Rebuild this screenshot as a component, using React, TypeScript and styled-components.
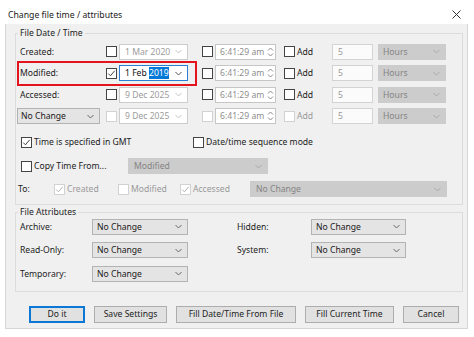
import { Fragment, type ReactNode } from 'react';
import styled, { createGlobalStyle } from 'styled-components';

const GlobalStyle = createGlobalStyle`
  html, body {
    margin: 0;
    padding: 0;
    background: #fff;
  }
  body {
    font-family: "Noto Sans", "Segoe UI", sans-serif;
    font-size: 8.6px;
    color: #222;
  }
`;

const Window = styled.div`
  width: 474px;
  height: 337px;
  background: #fff;
  overflow: hidden;
`;

const TitleBar = styled.div`
  height: 24px;
  box-sizing: border-box;
  padding: 5px 13px 0 8px;
  display: flex;
  align-items: center;
  font-size: 8.7px;
  color: #1a1a1a;
`;

const CloseIcon = styled.svg`
  margin-left: auto;
`;

const Body = styled.div`
  margin-left: 5px;
  width: 463px;
  height: 305px;
  box-sizing: border-box;
  background: #f0f0f0;
  border: 1px solid #d6d6d6;
  border-top: none;
  padding: 4px 0 0 9px;
`;

const Group = styled.fieldset<{ $padTop: number; $padBottom: number; $gapTop?: number }>`
  margin: ${({ $gapTop }) => $gapTop ?? 0}px 0 0 0;
  padding: ${({ $padTop }) => $padTop}px 0 ${({ $padBottom }) => $padBottom}px 0;
  width: 448px;
  box-sizing: border-box;
  border: 1px solid #dcdcdc;
  min-inline-size: 0;
`;

const Legend = styled.legend`
  line-height: 11px;
  height: 11px;
  padding: 0 2px;
  margin-left: 2px;
`;

const DateRow = styled.div`
  position: relative;
  display: flex;
  align-items: center;
  height: 21.5px;
`;

const RowLabel = styled.span`
  width: 88px;
  box-sizing: border-box;
  padding-left: 4px;
  flex: none;
`;

const RedFrame = styled.div`
  position: absolute;
  left: 1px;
  top: -1.5px;
  width: 180px;
  height: 25px;
  box-sizing: border-box;
  border: 2.5px solid #e3141c;
  pointer-events: none;
`;

const Box = styled.span<{ $off?: boolean; $gap?: number }>`
  display: inline-flex;
  align-items: center;
  justify-content: center;
  flex: none;
  width: 11px;
  height: 11px;
  box-sizing: border-box;
  margin-left: ${({ $gap }) => $gap ?? 0}px;
  border: 1px solid ${({ $off }) => ($off ? '#d2d2d2' : '#444')};
  background: #fff;
`;

type Tone = 'edit' | 'active' | 'list' | 'off';

const tones: Record<Tone, { bg: string; border: string; color: string; arrow: string }> = {
  edit: { bg: '#fff', border: '#cdcdcd', color: '#9c9c9c', arrow: '#c4c4c4' },
  active: { bg: '#fff', border: '#2a7fd4', color: '#111', arrow: '#555' },
  list: { bg: '#e4e4e4', border: '#b3b3b3', color: '#1a1a1a', arrow: '#666' },
  off: { bg: '#cccccc', border: '#cccccc', color: '#848484', arrow: '#a9a9a9' },
};

const ComboBox = styled.div<{ $w: number; $tone: Tone; $gap?: number; $pad?: number }>`
  width: ${({ $w }) => $w}px;
  height: 16px;
  flex: none;
  box-sizing: border-box;
  margin-left: ${({ $gap }) => $gap ?? 0}px;
  display: flex;
  align-items: center;
  padding: 0 5px 0 ${({ $pad }) => $pad ?? 4}px;
  background: ${({ $tone }) => tones[$tone].bg};
  border: 1px solid ${({ $tone }) => tones[$tone].border};
  color: ${({ $tone }) => tones[$tone].color};
  white-space: nowrap;
  overflow: hidden;
`;

const ComboText = styled.span`
  flex: 1;
`;

const Selected = styled.span`
  background: #0078d7;
  color: #fff;
`;

const TimeBox = styled.div<{ $gap: number }>`
  width: 61px;
  height: 16px;
  flex: none;
  box-sizing: border-box;
  margin-left: ${({ $gap }) => $gap}px;
  display: flex;
  align-items: center;
  padding: 0 1px 0 4px;
  background: #fff;
  border: 1px solid #c6c6c6;
  color: #8e8e8e;
  white-space: nowrap;
`;

const Spinner = styled.svg`
  margin-left: auto;
  flex: none;
`;

const AddCell = styled.span<{ $off?: boolean }>`
  width: 48px;
  flex: none;
  margin-left: 8px;
  display: flex;
  align-items: center;
  gap: 2px;
  color: ${({ $off }) => ($off ? '#9a9a9a' : '#222')};
`;

const NumField = styled.div`
  width: 41px;
  height: 16px;
  flex: none;
  box-sizing: border-box;
  padding-left: 5px;
  display: flex;
  align-items: center;
  background: #fbfbfb;
  border: 1px solid #d3d3d3;
  color: #999;
`;

const OptionRow = styled.div<{ $h: number; $top?: number; $left: number }>`
  display: flex;
  align-items: center;
  height: ${({ $h }) => $h}px;
  margin-top: ${({ $top }) => $top ?? 0}px;
  padding-left: ${({ $left }) => $left}px;
`;

const CheckLabel = styled.label<{ $w: number; $off?: boolean }>`
  width: ${({ $w }) => $w}px;
  flex: none;
  display: flex;
  align-items: center;
  gap: 2px;
  white-space: nowrap;
  color: ${({ $off }) => ($off ? '#9a9a9a' : '#222')};
`;

const ToLabel = styled.span`
  width: 36px;
  flex: none;
`;

const AttrGrid = styled.div`
  display: grid;
  grid-template-columns: 76px 96px 45px 78px 95px;
  grid-auto-rows: 18px;
  row-gap: 5.5px;
  align-items: center;
`;

const AttrLabel = styled.span`
  padding-left: 4px;
`;

const ButtonRow = styled.div`
  display: flex;
  gap: 9px;
  margin: 14px 0 0 14px;
`;

const Button = styled.button<{ $w: number; $primary?: boolean }>`
  width: ${({ $w }) => $w}px;
  height: 17px;
  padding: 0;
  font: inherit;
  color: #222;
  background: #e1e1e1;
  border: 1px solid ${({ $primary }) => ($primary ? '#0a78d4' : '#adadad')};
  box-shadow: ${({ $primary }) => ($primary ? 'inset 0 0 0 1px #0a78d4' : 'none')};
`;

function Tick({ color }: { color: string }) {
  return (
    <svg width="9" height="9" viewBox="0 0 9 9">
      <polyline points="1.3,4.6 3.4,6.8 7.7,1.8" fill="none" stroke={color} strokeWidth="1" />
    </svg>
  );
}

function Check({ checked, off, gap }: { checked?: boolean; off?: boolean; gap?: number }) {
  return (
    <Box $off={off} $gap={gap}>
      {checked && <Tick color={off ? '#b4b4b4' : '#444'} />}
    </Box>
  );
}

function Chevron({ color }: { color: string }) {
  return (
    <svg width="7" height="5" viewBox="0 0 7 5">
      <polyline points="0.5,1 3.5,4 6.5,1" fill="none" stroke={color} strokeWidth="1" />
    </svg>
  );
}

function Combo({
  w,
  tone,
  gap,
  pad,
  children,
}: {
  w: number;
  tone: Tone;
  gap?: number;
  pad?: number;
  children: ReactNode;
}) {
  return (
    <ComboBox $w={w} $tone={tone} $gap={gap} $pad={pad}>
      <ComboText>{children}</ComboText>
      <Chevron color={tones[tone].arrow} />
    </ComboBox>
  );
}

interface DateEntry {
  label?: string;
  checked?: boolean;
  date: string;
  selected?: string;
  marked?: boolean;
}

const dateRows: DateEntry[] = [
  { label: 'Created:', date: '1 Mar 2020' },
  { label: 'Modified:', checked: true, date: '1 Feb ', selected: '2019', marked: true },
  { label: 'Accessed:', date: '9 Dec 2025' },
  { date: '9 Dec 2025' },
];

const attributes: [string, string | null][] = [
  ['Archive:', 'Hidden:'],
  ['Read-Only:', 'System:'],
  ['Temporary:', null],
];

export default function App() {
  return (
    <>
      <GlobalStyle />
      <Window>
        <TitleBar>
          Change file time / attributes
          <CloseIcon width="9" height="9" viewBox="0 0 9 9">
            <path d="M0.5 0.5 L8.5 8.5 M8.5 0.5 L0.5 8.5" stroke="#333" strokeWidth="1" />
          </CloseIcon>
        </TitleBar>
        <Body>
          <Group $padTop={2} $padBottom={4.5}>
            <Legend>File Date / Time</Legend>
            {dateRows.map((row) => {
              const off = !row.label;
              return (
                <DateRow key={row.date + (row.label ?? 'none')}>
                  {row.label ? (
                    <RowLabel>{row.label}</RowLabel>
                  ) : (
                    <Combo w={83} tone="list" gap={1} pad={3}>
                      No Change
                    </Combo>
                  )}
                  <Check checked={row.checked} off={off} gap={off ? 6 : 2} />
                  <Combo w={69} tone={row.selected ? 'active' : 'edit'} gap={2} pad={5}>
                    {row.date}
                    {row.selected && <Selected>{row.selected}</Selected>}
                  </Combo>
                  <Check off={off} gap={14} />
                  <TimeBox $gap={2}>
                    6:41:29 am
                    <Spinner width="7" height="12" viewBox="0 0 7 12">
                      <polyline points="1,4.5 3.5,2 6,4.5" fill="none" stroke="#8a8a8a" strokeWidth="1" />
                      <polyline points="1,7.5 3.5,10 6,7.5" fill="none" stroke="#8a8a8a" strokeWidth="1" />
                    </Spinner>
                  </TimeBox>
                  <AddCell $off={off}>
                    <Check off={off} />
                    Add
                  </AddCell>
                  <NumField>5</NumField>
                  <Combo w={68} tone="off" gap={5}>
                    Hours
                  </Combo>
                  {row.marked && <RedFrame />}
                </DateRow>
              );
            })}
            <OptionRow $h={22} $top={4} $left={5}>
              <CheckLabel $w={172}>
                <Check checked />
                Time is specified in GMT
              </CheckLabel>
              <CheckLabel $w={120}>
                <Check />
                Date/time sequence mode
              </CheckLabel>
            </OptionRow>
            <OptionRow $h={26} $left={5}>
              <CheckLabel $w={107}>
                <Check />
                Copy Time From...
              </CheckLabel>
              <Combo w={140} tone="off" pad={5}>
                Modified
              </Combo>
            </OptionRow>
            <OptionRow $h={20} $left={2}>
              <ToLabel>To:</ToLabel>
              <CheckLabel $w={64} $off>
                <Check checked off />
                Created
              </CheckLabel>
              <CheckLabel $w={62} $off>
                <Check off />
                Modified
              </CheckLabel>
              <CheckLabel $w={70} $off>
                <Check checked off />
                Accessed
              </CheckLabel>
              <Combo w={197} tone="off" pad={5}>
                No Change
              </Combo>
            </OptionRow>
          </Group>
          <Group $padTop={0} $padBottom={8} $gapTop={2}>
            <Legend>File Attributes</Legend>
            <AttrGrid>
              {attributes.map(([left, right]) => (
                <Fragment key={left}>
                  <AttrLabel>{left}</AttrLabel>
                  <Combo w={96} tone="list">
                    No Change
                  </Combo>
                  <span />
                  {right ? <AttrLabel>{right}</AttrLabel> : <span />}
                  {right ? (
                    <Combo w={95} tone="list">
                      No Change
                    </Combo>
                  ) : (
                    <span />
                  )}
                </Fragment>
              ))}
            </AttrGrid>
          </Group>
          <ButtonRow>
            <Button $w={56} $primary>
              Do it
            </Button>
            <Button $w={73}>Save Settings</Button>
            <Button $w={120}>Fill Date/Time From File</Button>
            <Button $w={89}>Fill Current Time</Button>
            <Button $w={56}>Cancel</Button>
          </ButtonRow>
        </Body>
      </Window>
    </>
  );
}
